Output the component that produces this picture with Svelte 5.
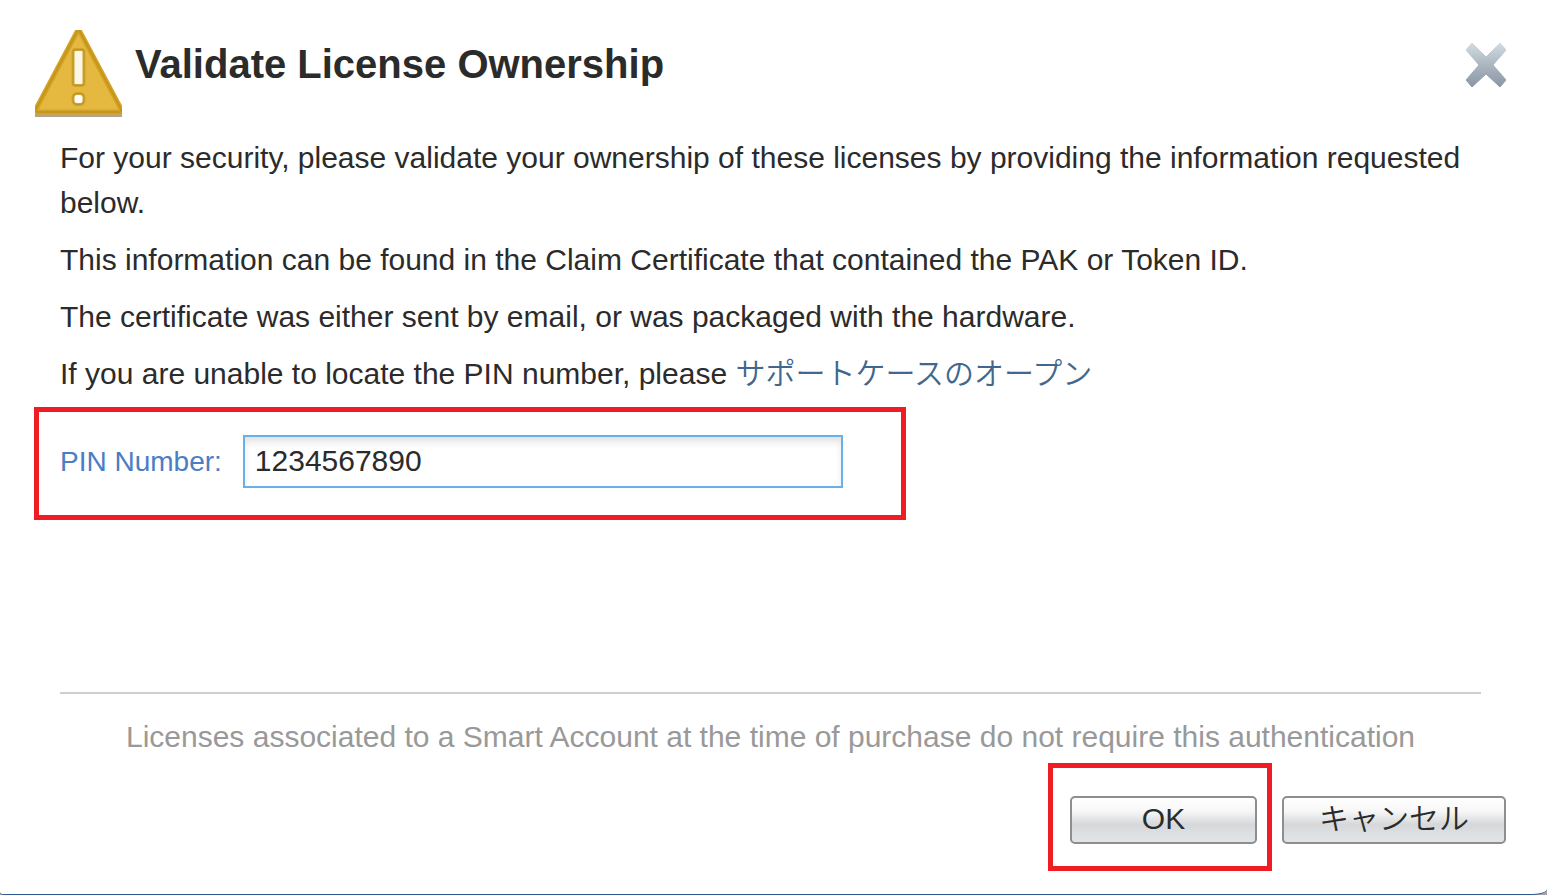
<script>
  let pin = $state('1234567890');
</script>

<main class="dialog">
  <header>
    <svg class="warning" viewBox="0 0 87 87" aria-hidden="true">
      <defs>
        <clipPath id="frame"><rect width="87" height="87" /></clipPath>
      </defs>
      <g clip-path="url(#frame)">
        <path d="M0 82H87V87H0Z" fill="#b5a28c" />
        <path d="M43.5 -1L86 79Q87 82 84 82H3Q0 82 1 79Z" fill="#e5b93f" stroke="#d3a42c" stroke-width="5" stroke-linejoin="round" />
        <path d="M43.5 -1L86 79Q87 82 84 82H3Q0 82 1 79Z" fill="none" stroke="#c79614" stroke-width="2" stroke-linejoin="round" />
        <rect x="38" y="19.5" width="11" height="36" rx="2.5" fill="#fbf6e6" stroke="#d0a433" stroke-width="3" />
        <rect x="38" y="19.5" width="11" height="36" rx="2" fill="none" stroke="#bd9424" stroke-width="1" />
        <rect x="38" y="63.5" width="11" height="11" rx="4" fill="#fffefa" stroke="#d0a433" stroke-width="3" />
        <rect x="38" y="63.5" width="11" height="11" rx="4" fill="none" stroke="#bd9424" stroke-width="1" />
      </g>
    </svg>
    <h1>Validate License Ownership</h1>
    <button class="close" type="button" aria-label="Close">
      <svg viewBox="0 0 40 45" aria-hidden="true">
        <defs>
          <linearGradient id="steel" x1="0" y1="0" x2="0" y2="45" gradientUnits="userSpaceOnUse">
            <stop offset="0" stop-color="#d3dce2" />
            <stop offset="0.5" stop-color="#aab5be" />
            <stop offset="1" stop-color="#8994a5" />
          </linearGradient>
        </defs>
        <path d="M6 0L20 14L34 0L40 7L27 22L40 37L34 44L20 31L6 44L0 37L13 22L0 7Z" fill="url(#steel)" stroke="url(#steel)" stroke-width="1" stroke-linejoin="round" />
      </svg>
    </button>
  </header>

  <section class="message">
    <p>For your security, please validate your ownership of these licenses by providing the information requested below.</p>
    <p>This information can be found in the Claim Certificate that contained the PAK or Token ID.</p>
    <p>The certificate was either sent by email, or was packaged with the hardware.</p>
    <p>If you are unable to locate the PIN number, please <a href="#support">サポートケースのオープン</a></p>
  </section>

  <div class="pin marked">
    <label for="pin">PIN Number:</label>
    <input id="pin" type="text" bind:value={pin} />
  </div>

  <footer>
    <p class="note">Licenses associated to a Smart Account at the time of purchase do not require this authentication</p>
    <div class="actions">
      <div class="marked ok"><button class="action" type="button">OK</button></div>
      <button class="action cancel" type="button">キャンセル</button>
    </div>
  </footer>
</main>

<style>
  :global(body) {
    background: #a3a3a8;
  }
  .dialog {
    box-sizing: border-box;
    display: flex;
    flex-direction: column;
    min-height: 100vh;
    padding: 30px 41px 23px 34px;
    background: #fff;
    border-bottom: 1px solid #30568f;
    border-radius: 0 0 14px 4px / 0 0 6px 3px;
    color: #2b2b2b;
    font: 30px/45px "Liberation Sans", "Noto Sans CJK JP", sans-serif;
  }
  header {
    display: flex;
    align-items: flex-start;
    gap: 13px;
  }
  .warning {
    width: 87px;
    height: 87px;
    margin-left: 1px;
    flex: none;
  }
  h1 {
    flex: 1;
    margin: 12px 0 0;
    font-size: 40px;
    line-height: 45px;
  }
  .close {
    margin-top: 13px;
    padding: 0;
    border: 0;
    background: none;
    cursor: pointer;
  }
  .close svg {
    display: block;
    width: 40px;
    height: 45px;
  }
  .message {
    margin: 18px 0 0 26px;
  }
  p {
    margin: 0 0 12px;
  }
  .message p:last-child {
    margin-bottom: 11px;
  }
  a {
    color: #41678f;
    font-weight: 350;
    text-decoration: none;
    line-height: 30px;
  }
  .marked {
    box-sizing: border-box;
    border: 5px solid #ef1c24;
  }
  .pin {
    display: flex;
    align-items: center;
    align-self: flex-start;
    gap: 21px;
    padding: 23px 58px 27px 21px;
  }
  label {
    color: #4a7dc4;
    font-size: 28px;
  }
  input {
    box-sizing: border-box;
    width: 600px;
    height: 53px;
    padding: 0 10px 2px;
    border: 2px solid #6aaeee;
    background: #fff;
    box-shadow: inset 0 6px 8px -2px #dedede;
    color: #2b2b2b;
    font: inherit;
    outline: none;
  }
  footer {
    margin-top: auto;
  }
  .note {
    margin: 0 25px 0 26px;
    padding-top: 20px;
    border-top: 2px solid #cfcfcf;
    color: #999;
    text-align: center;
  }
  .actions {
    display: flex;
    align-items: center;
    justify-content: flex-end;
    gap: 10px;
    margin-top: 4px;
  }
  .ok {
    padding: 28px 10px 22px 17px;
  }
  .action {
    box-sizing: border-box;
    display: block;
    width: 187px;
    height: 48px;
    padding: 0 0 3px;
    border: 2px solid #8e8e8e;
    border-radius: 5px;
    background: linear-gradient(#fff, #f7f7f8 30%, #d6d8da 60%, #d6d8da 64%, #dde0e3 80%, #e1e4e7);
    color: #2b2b2b;
    font: inherit;
    line-height: 38px;
    cursor: pointer;
  }
  .cancel {
    width: 224px;
    margin-top: 6px;
    font-weight: 350;
  }
</style>
